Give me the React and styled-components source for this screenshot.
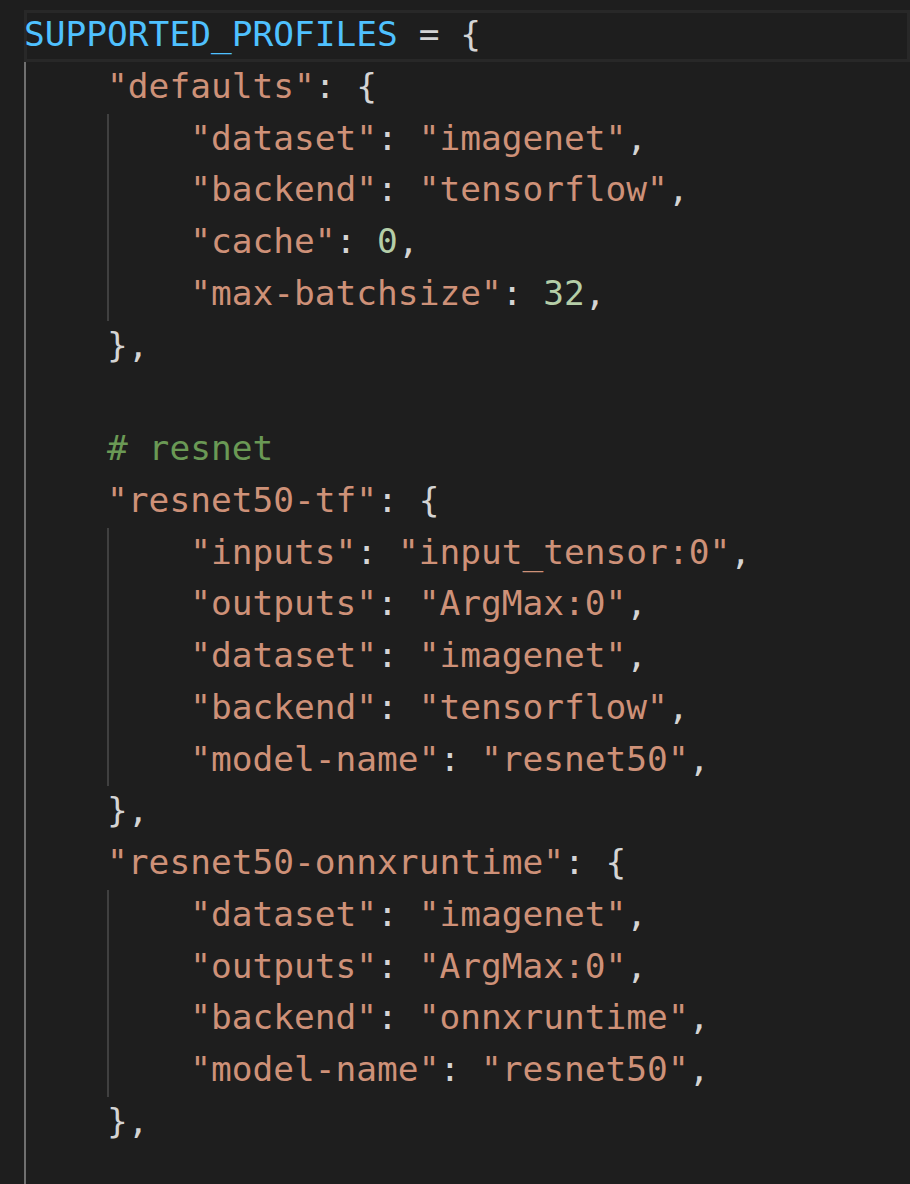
import styled, { createGlobalStyle } from "styled-components";

const GlobalStyle = createGlobalStyle`
  html, body {
    margin: 0;
    background: #1e1e1e;
  }
`;

// indent = guide depth, text is written without leading spaces
const source = [
  { indent: 0, text: "SUPPORTED_PROFILES = {", current: true },
  { indent: 1, text: '"defaults": {' },
  { indent: 2, text: '"dataset": "imagenet",' },
  { indent: 2, text: '"backend": "tensorflow",' },
  { indent: 2, text: '"cache": 0,' },
  { indent: 2, text: '"max-batchsize": 32,' },
  { indent: 1, text: "}," },
  { indent: 1, text: "" },
  { indent: 1, text: "# resnet" },
  { indent: 1, text: '"resnet50-tf": {' },
  { indent: 2, text: '"inputs": "input_tensor:0",' },
  { indent: 2, text: '"outputs": "ArgMax:0",' },
  { indent: 2, text: '"dataset": "imagenet",' },
  { indent: 2, text: '"backend": "tensorflow",' },
  { indent: 2, text: '"model-name": "resnet50",' },
  { indent: 1, text: "}," },
  { indent: 1, text: '"resnet50-onnxruntime": {' },
  { indent: 2, text: '"dataset": "imagenet",' },
  { indent: 2, text: '"outputs": "ArgMax:0",' },
  { indent: 2, text: '"backend": "onnxruntime",' },
  { indent: 2, text: '"model-name": "resnet50",' },
  { indent: 1, text: "}," },
  { indent: 1, text: "" },
  { indent: 1, text: "" },
];

function tokenize(src) {
  const out = [];
  const re = /"[^"]*"|#.*|\d+|[A-Z_]+/g;
  let last = 0;
  let m;
  while ((m = re.exec(src))) {
    if (m.index > last) out.push(["punct", src.slice(last, m.index)]);
    const v = m[0];
    const kind =
      v[0] === '"' ? "string" : v[0] === "#" ? "comment" : /\d/.test(v[0]) ? "number" : "variable";
    out.push([kind, v]);
    last = re.lastIndex;
  }
  if (last < src.length) out.push(["punct", src.slice(last)]);
  return out;
}

const colors = {
  punct: "#d4d4d4",
  string: "#ce9178",
  number: "#b5cea8",
  comment: "#6a9955",
  variable: "#4fc1ff",
};

function App() {
  return (
    <>
      <GlobalStyle />
      <Editor>
        {source.map((line, i) => (
          <Line key={i} $current={line.current}>
            {Array.from({ length: line.indent }).map((_, lvl) => (
              <Indent key={lvl} $active={lvl === 0} />
            ))}
            <Code>
              {tokenize(line.text).map(([kind, value], j) => (
                <Token key={j} $kind={kind}>
                  {value}
                </Token>
              ))}
            </Code>
          </Line>
        ))}
      </Editor>
    </>
  );
}

const Editor = styled.div`
  height: 1184px;
  overflow: hidden;
  padding: 10px 0 0 24px;
  box-sizing: border-box;
  font-family: "DejaVu Sans Mono", "Liberation Mono", monospace;
  font-size: 34.5px;
`;

const Line = styled.div`
  display: flex;
  height: 51.75px;
  line-height: 51.75px;
  white-space: pre;
  box-shadow: ${(p) => (p.$current ? "inset 0 0 0 3px #282828" : "none")};
`;

const Indent = styled.span`
  flex: none;
  width: 4ch;
  box-sizing: border-box;
  border-left: 2px solid ${(p) => (p.$active ? "#707070" : "#404040")};
`;

const Code = styled.span`
  position: relative;
  top: -1px;
`;

const Token = styled.span`
  color: ${(p) => colors[p.$kind]};
`;

export default App;
